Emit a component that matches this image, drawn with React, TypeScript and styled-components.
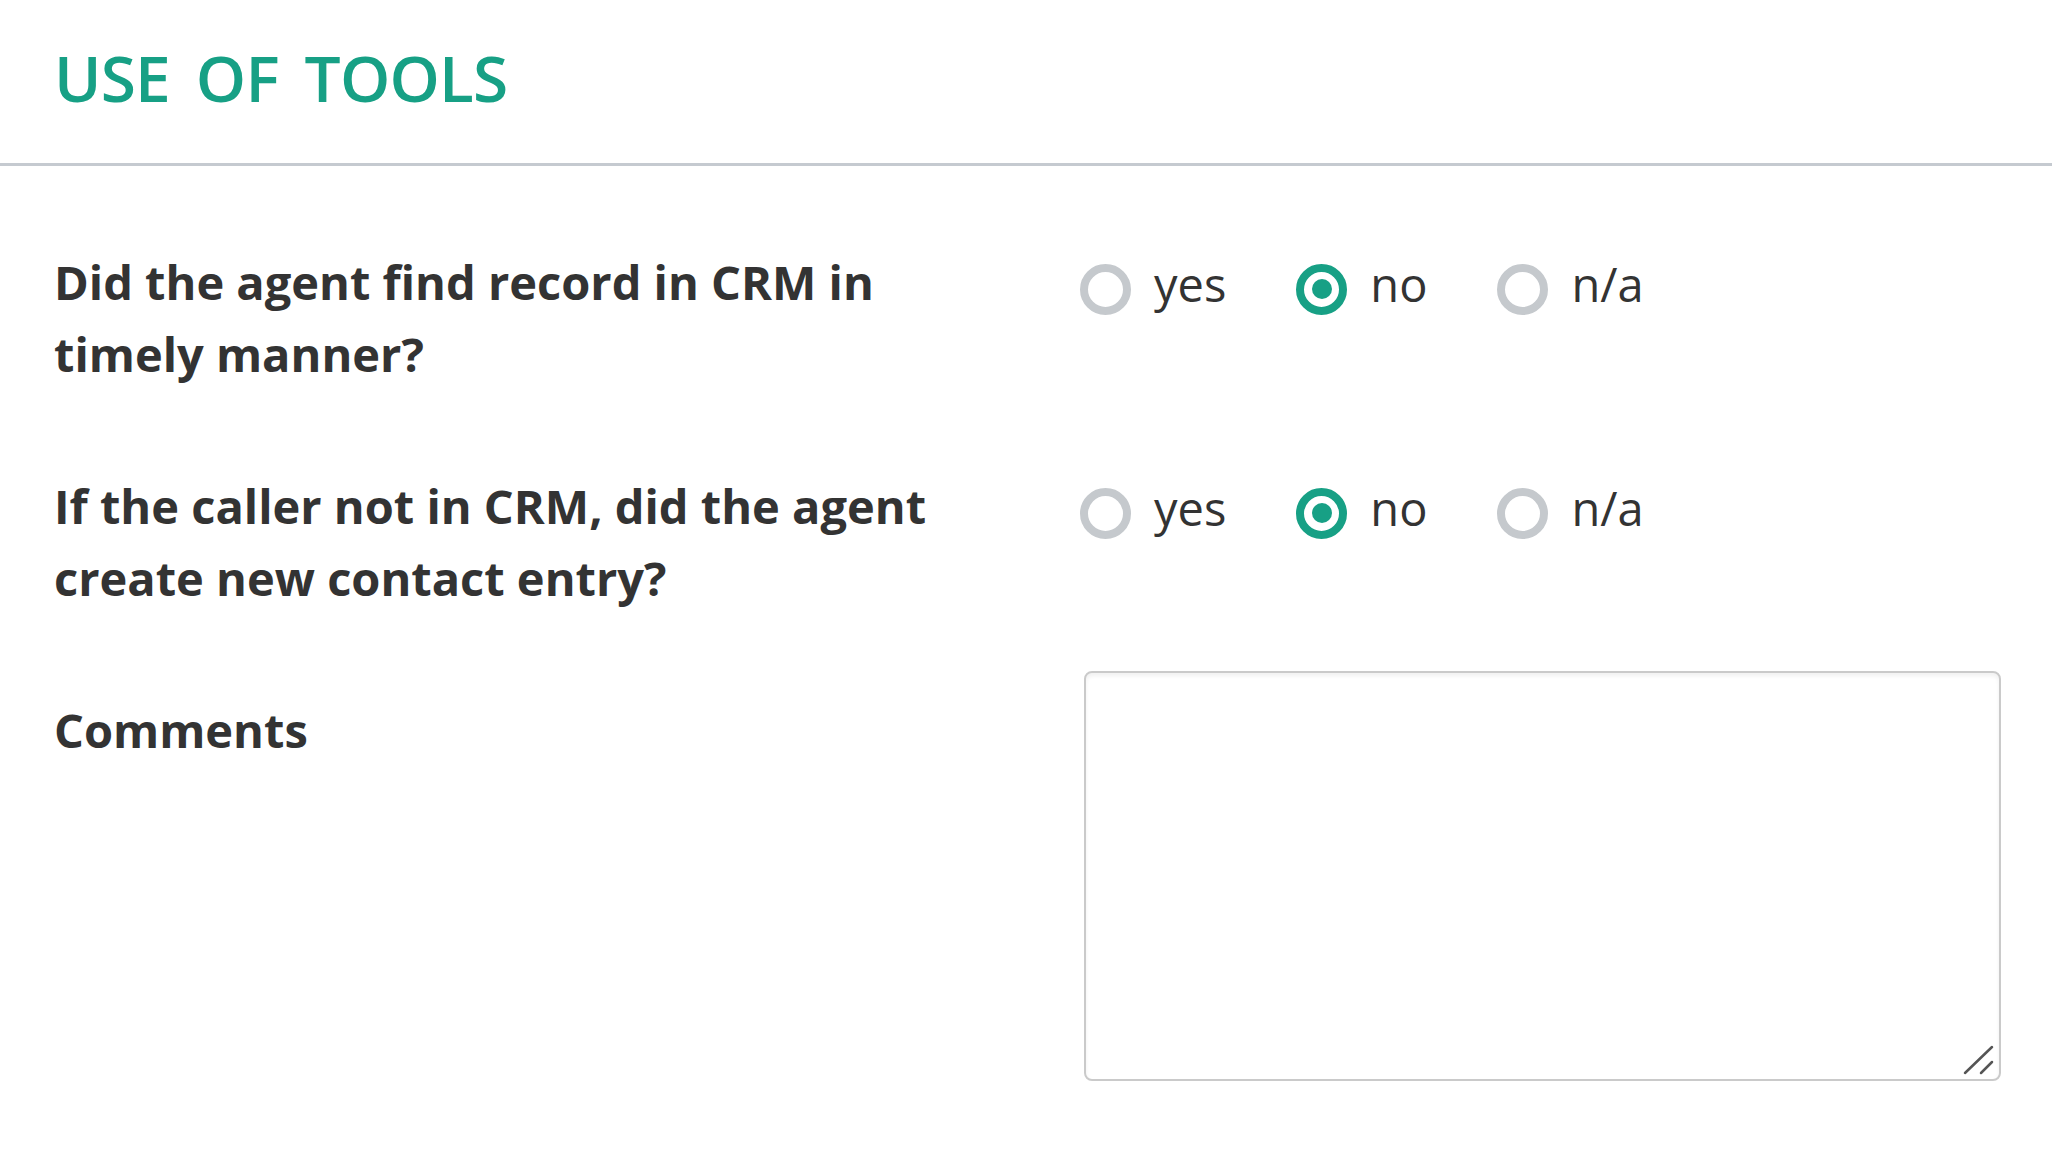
import styled, { createGlobalStyle } from 'styled-components';

const GlobalStyle = createGlobalStyle`
  html, body {
    margin: 0;
    padding: 0;
    background: #ffffff;
  }
  body {
    font-family: "Open Sans", "Liberation Sans", sans-serif;
    color: #333333;
  }
`;

const Page = styled.div`
  width: 2052px;
  min-height: 1154px;
  background: #ffffff;
`;

const Header = styled.header`
  padding: 40px 54px 46px;
  border-bottom: 3px solid #c5cad0;
`;

const Title = styled.h1`
  margin: 0;
  font-size: 64px;
  line-height: 1.2;
  font-weight: 600;
  color: #17a085;
  letter-spacing: -0.8px;
  word-spacing: 10px;
`;

const Body = styled.div`
  padding: 80px 52px 0 54px;
`;

const Row = styled.div<{ $top?: number }>`
  display: grid;
  grid-template-columns: 900px 1fr;
  column-gap: 126px;
  margin-top: ${({ $top }) => $top ?? 0}px;
`;

const Label = styled.div<{ $pad?: number }>`
  font-size: 47px;
  line-height: 72px;
  font-weight: 700;
  color: #333333;
  padding-top: ${({ $pad }) => $pad ?? 0}px;
`;

const Options = styled.div`
  display: flex;
  align-items: flex-start;
  gap: 70px;
`;

const Option = styled.label`
  display: flex;
  align-items: flex-start;
  gap: 23px;
  font-size: 47px;
  line-height: 72px;
  padding-top: 2px;
  font-weight: 400;
  color: #333333;
  cursor: pointer;
`;

const Radio = styled.span<{ $checked?: boolean }>`
  box-sizing: border-box;
  width: 51px;
  height: 51px;
  margin-top: 16px;
  border-radius: 50%;
  border: 8px solid ${({ $checked }) => ($checked ? '#17a085' : '#c5c9cd')};
  display: flex;
  align-items: center;
  justify-content: center;
  flex-shrink: 0;

  &::after {
    content: '';
    width: 20px;
    height: 20px;
    border-radius: 50%;
    background: #17a085;
    display: ${({ $checked }) => ($checked ? 'block' : 'none')};
  }
`;

const AreaWrap = styled.div`
  position: relative;
  width: 917px;
  height: 410px;
  margin-left: 4px;
`;

const TextArea = styled.textarea`
  box-sizing: border-box;
  width: 100%;
  height: 100%;
  border: 2px solid #cacaca;
  border-radius: 8px;
  box-shadow: inset 0 3px 4px rgba(0, 0, 0, 0.06);
  resize: none;
  outline: none;
  font-family: "Open Sans", "Liberation Sans", sans-serif;
  font-size: 32px;
  padding: 16px;
`;

const Grip = styled.svg`
  position: absolute;
  right: 4px;
  bottom: 4px;
  pointer-events: none;
`;

const questions = [
  'Did the agent find record in CRM in timely manner?',
  'If the caller not in CRM, did the agent create new contact entry?',
];

const choices = ['yes', 'no', 'n/a'];

export default function App() {
  return (
    <Page>
      <GlobalStyle />
      <Header>
        <Title>USE OF TOOLS</Title>
      </Header>
      <Body>
        {questions.map((q, i) => (
          <Row key={q} $top={i === 0 ? 0 : 80}>
            <Label>{q}</Label>
            <Options>
              {choices.map((c) => (
                <Option key={c}>
                  <Radio $checked={c === 'no'} />
                  {c}
                </Option>
              ))}
            </Options>
          </Row>
        ))}
        <Row $top={57}>
          <Label $pad={23}>Comments</Label>
          <AreaWrap>
            <TextArea />
            <Grip width="34" height="34" viewBox="0 0 34 34">
              <path d="M2 30 L29 4 M18 30 L29 19" stroke="#555" strokeWidth="2.5" strokeLinecap="round" fill="none" />
            </Grip>
          </AreaWrap>
        </Row>
      </Body>
    </Page>
  );
}
